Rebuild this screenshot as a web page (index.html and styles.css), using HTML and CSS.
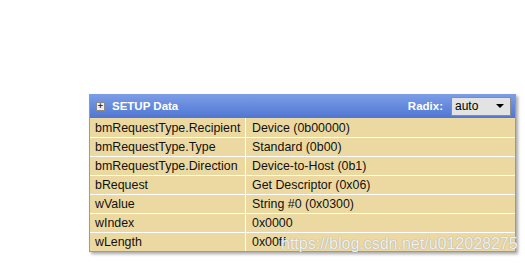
FILE: index.html
```html
<!DOCTYPE html>
<html lang="en">
<head>
  <meta charset="UTF-8">
  <title>SETUP Data</title>
  <link rel="stylesheet" href="styles.css">
</head>
<body>

<div class="panel">
  <div class="panel-head">
    <span class="expander">+</span>
    <span class="title">SETUP Data</span>
    <span class="radix">Radix:</span>
    <div class="select">
      <span>auto</span>
      <span class="arrow"></span>
    </div>
  </div>

  <table class="fields">
    <tr><td class="name">bmRequestType.Recipient</td><td>Device (0b00000)</td></tr>
    <tr><td class="name">bmRequestType.Type</td><td>Standard (0b00)</td></tr>
    <tr><td class="name">bmRequestType.Direction</td><td>Device-to-Host (0b1)</td></tr>
    <tr><td class="name">bRequest</td><td>Get Descriptor (0x06)</td></tr>
    <tr><td class="name">wValue</td><td>String #0 (0x0300)</td></tr>
    <tr><td class="name">wIndex</td><td>0x0000</td></tr>
    <tr><td class="name">wLength</td><td>0x00ff</td></tr>
  </table>
</div>

<div class="watermark">https://blog.csdn.net/u012028275</div>

</body>
</html>
```

FILE: styles.css
```css
body {
  margin: 0;
  background: #fff;
  font-family: "Liberation Sans", Arial, sans-serif;
  position: relative;
  height: 268px;
  overflow: hidden;
}

.panel {
  margin: 94px 0 0 89px;
  width: 425px;
  border: 1px solid #9a9a9a;
  border-top: none;
  box-shadow: 2px 2px 3px rgba(0, 0, 0, 0.35);
}

.panel-head {
  height: 24px;
  display: flex;
  align-items: center;
  padding: 0 4px 0 6px;
  background: linear-gradient(#7d9ee6, #4f76d3);
  color: #fff;
  font-weight: bold;
  font-size: 11.5px;
}

.expander {
  width: 7px;
  height: 7px;
  line-height: 7px;
  border: 1px solid #8a8a8a;
  background: #eee;
  color: #333;
  font-size: 9px;
  text-align: center;
  margin-right: 7px;
}

.title {
  flex: 1;
}

.radix {
  margin-right: 8px;
}

.select {
  height: 17px;
  border: 1px solid #8c8c8c;
  background: #e3e3e3;
  color: #000;
  font-weight: normal;
  font-size: 12px;
  display: flex;
  align-items: center;
  justify-content: space-between;
  padding: 0 6px 0 3px;
  width: 49px;
}

.arrow {
  width: 0;
  height: 0;
  border-left: 4px solid transparent;
  border-right: 4px solid transparent;
  border-top: 4px solid #000;
}

.fields {
  width: 100%;
  border-collapse: collapse;
  background: #ecd9a1;
  font-size: 12.4px;
  color: #111;
}

.fields td {
  height: 18px;
  line-height: 18px;
  padding: 0 0 0 6px;
  border-bottom: 1px solid #fff;
  white-space: nowrap;
}

.fields tr:first-child td {
  height: 19px;
}

.fields tr:last-child td {
  border-bottom: none;
}

.fields td.name {
  width: 150px;
  padding-left: 5px;
  border-right: 1px solid #fff;
}

.watermark {
  position: absolute;
  left: 281px;
  top: 235px;
  font-size: 16px;
  color: rgba(255, 255, 255, 0.85);
  text-shadow: 0 0 1px #aaa, 0 0 1px #aaa;
}
```
